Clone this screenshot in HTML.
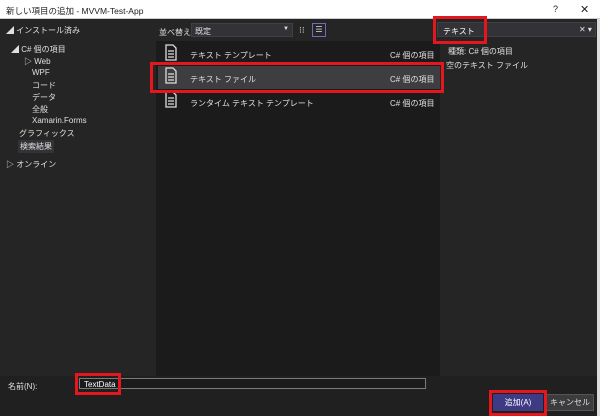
<!DOCTYPE html><html><head><meta charset="utf-8"><style>
*{margin:0;padding:0;box-sizing:border-box}
body{width:600px;height:416px;overflow:hidden;background:#252526;font-family:"Liberation Sans","Noto Sans CJK JP",sans-serif;font-size:8px;color:#e0e0e0;position:relative}
.a{position:absolute;white-space:nowrap}
.red{position:absolute;border:3px solid #e5161d}
</style></head><body>
<div class="a" style="left:0;top:0;width:600px;height:19px;background:#fff;border-bottom:1px solid #ccc"></div>
<div class="a" style="left:6px;top:5px;color:#222;font-size:8.5px">新しい項目の追加 - MVVM-Test-App</div>
<div class="a" style="left:553px;top:4px;color:#222;font-size:9px">?</div>
<div class="a" style="left:580px;top:3px;color:#222;font-size:11px">✕</div>
<div class="a" style="left:597px;top:19px;width:3px;height:397px;background:#ddd"></div>
<div class="a" style="left:156px;top:41px;width:284px;height:335px;background:#1b1b1c"></div>
<div class="a" style="left:6px;top:25px">◢ インストール済み</div>
<div class="a" style="left:11px;top:44px">◢ C# 個の項目</div>
<div class="a" style="left:24px;top:56px">▷ Web</div>
<div class="a" style="left:32px;top:68px">WPF</div>
<div class="a" style="left:32px;top:80px">コード</div>
<div class="a" style="left:32px;top:92px">データ</div>
<div class="a" style="left:32px;top:104px">全般</div>
<div class="a" style="left:32px;top:116px">Xamarin.Forms</div>
<div class="a" style="left:19px;top:128px">グラフィックス</div>
<div class="a" style="left:18px;top:140px;background:#333337;padding:1px 2px">検索結果</div>
<div class="a" style="left:6px;top:159px">▷ オンライン</div>
<div class="a" style="left:159px;top:27px">並べ替え:</div>
<div class="a" style="left:191px;top:23px;width:102px;height:14px;background:#333337;border:1px solid #3f3f46;padding:2px 3px">既定<span style="position:absolute;right:3px;top:2px;font-size:6px">▼</span></div>
<div class="a" style="left:299px;top:25px;font-size:9px">⁝⁝</div>
<div class="a" style="left:312px;top:23px;width:14px;height:14px;border:1px solid #6c6cc0;font-size:8px;text-align:center;line-height:12px">☰</div>
<div class="a" style="left:158px;top:66px;width:282px;height:23px;background:#3e3e40"></div>
<svg class="a" style="left:164px;top:44px" width="14" height="70"><g fill="none" stroke="#ddd" stroke-width="1.3"><path d="M2 1h7l3 3v12H2z"/><path d="M4 7h6M4 10h6M4 13h6"/><path d="M2 24h7l3 3v12H2z"/><path d="M4 30h6M4 33h6M4 36h6"/><path d="M2 48h7l3 3v12H2z"/><path d="M4 54h6M4 57h6M4 60h6"/></g></svg>
<div class="a" style="left:190px;top:50px">テキスト テンプレート</div>
<div class="a" style="left:190px;top:74px">テキスト ファイル</div>
<div class="a" style="left:190px;top:98px">ランタイム テキスト テンプレート</div>
<div class="a" style="left:390px;top:50px">C# 個の項目</div>
<div class="a" style="left:390px;top:74px">C# 個の項目</div>
<div class="a" style="left:390px;top:98px">C# 個の項目</div>
<div class="a" style="left:437px;top:22px;width:159px;height:15px;background:#333337;border:1px solid #3f3f46"></div>
<div class="a" style="left:443px;top:26px;color:#fff">テキスト</div>
<div class="a" style="left:579px;top:25px;font-size:8px">✕ ▾</div>
<div class="a" style="left:448px;top:46px">種類: C# 個の項目</div>
<div class="a" style="left:446px;top:60px">空のテキスト ファイル</div>
<div class="a" style="left:0;top:376px;width:597px;height:40px;background:#202021"></div>
<div class="a" style="left:8px;top:381px">名前(N):</div>
<div class="a" style="left:79px;top:378px;width:347px;height:11px;background:#1b1b1c;border:1px solid #7a7a7a"></div>
<div class="a" style="left:84px;top:380px;color:#fff">TextData</div>
<div class="a" style="left:493px;top:394px;width:50px;height:17px;background:#3f3a84;text-align:center;line-height:17px;color:#fff">追加(A)</div>
<div class="a" style="left:546px;top:394px;width:48px;height:17px;background:#3c3c3e;border:1px solid #555;text-align:center;line-height:15px">キャンセル</div>
<div class="red" style="left:433px;top:16px;width:54px;height:28px"></div>
<div class="red" style="left:150px;top:62px;width:294px;height:31px"></div>
<div class="red" style="left:75px;top:373px;width:46px;height:22px"></div>
<div class="red" style="left:489px;top:390px;width:58px;height:26px"></div>
</body></html>
